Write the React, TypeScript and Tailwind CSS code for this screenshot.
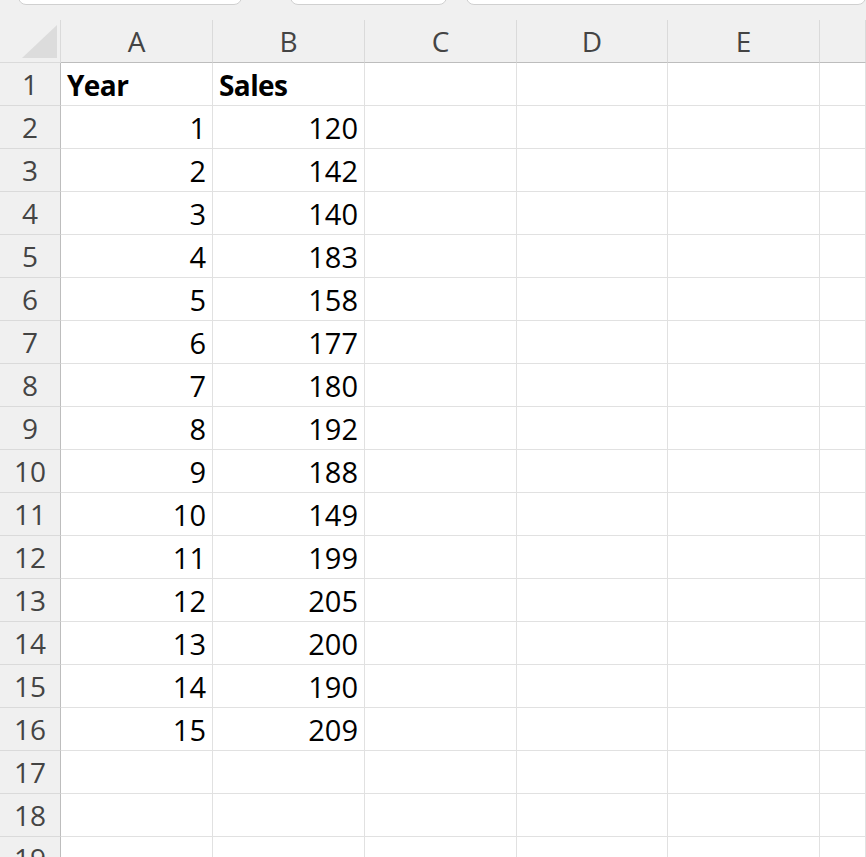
const data: [number, number][] = [
  [1, 120], [2, 142], [3, 140], [4, 183], [5, 158], [6, 177], [7, 180], [8, 192],
  [9, 188], [10, 149], [11, 199], [12, 205], [13, 200], [14, 190], [15, 209],
];

const cols = ["A", "B", "C", "D", "E", ""];
const grid = "grid grid-cols-[61px_152px_152px_152px_151px_152px_1fr]";

function Cell({ children, bold, right }: { children?: React.ReactNode; bold?: boolean; right?: boolean }) {
  return (
    <div
      className={`h-[43px] border-r border-b border-[#e1e1e1] px-[6px] pt-[5px] leading-[34px] text-black ${bold ? "text-[28px] font-bold tracking-[-0.6px]" : "text-[29px]"} ${right ? "text-right" : "text-left"}`}
    >
      {children}
    </div>
  );
}

export default function App() {
  const rows = Array.from({ length: 19 }, (_, i) => i + 1);
  return (
    <div className="h-[857px] w-[866px] overflow-hidden bg-white font-['Open_Sans',sans-serif]">
      {/* sheet tabs strip */}
      <div className="flex h-[20px] bg-[#f0f0f0]">
        <div className="flex h-[5px] w-full items-end overflow-hidden">
          <div className="ml-[18px] h-[20px] w-[224px] rounded-b-[8px] border border-[#d0d0d0] bg-white" />
          <div className="ml-[48px] h-[20px] w-[157px] rounded-b-[8px] border border-[#d0d0d0] bg-white" />
          <div className="ml-[19px] h-[20px] flex-1 rounded-b-[8px] border border-[#d0d0d0] bg-white" />
        </div>
      </div>

      {/* column headers */}
      <div className={`${grid} h-[43px] bg-[#f0f0f0]`}>
        <div className="relative border-r border-b border-r-[#dadada] border-b-[#dadada]">
          <div className="absolute left-[22px] top-[5px] h-[33px] w-[35px] bg-[#dcdcdc] [clip-path:polygon(100%_0,100%_100%,0_100%)]" />
        </div>
        {cols.map((c, i) => (
          <div
            key={i}
            className="border-r border-b border-r-[#dadada] border-b-[#bdbdbd] text-center text-[28px] leading-[42px] text-[#444]"
          >
            {c}
          </div>
        ))}
      </div>

      {/* rows */}
      {rows.map((r) => {
        const d = data[r - 2];
        return (
          <div key={r} className={grid}>
            <div className="h-[43px] border-r border-b border-r-[#bdbdbd] border-b-[#dadada] bg-[#f0f0f0] text-center text-[28px] leading-[42px] text-[#444]">
              {r}
            </div>
            {r === 1 ? (
              <>
                <Cell bold>Year</Cell>
                <Cell bold>Sales</Cell>
              </>
            ) : d ? (
              <>
                <Cell right>{d[0]}</Cell>
                <Cell right>{d[1]}</Cell>
              </>
            ) : (
              <>
                <Cell />
                <Cell />
              </>
            )}
            <Cell />
            <Cell />
            <Cell />
            <Cell />
          </div>
        );
      })}
    </div>
  );
}
